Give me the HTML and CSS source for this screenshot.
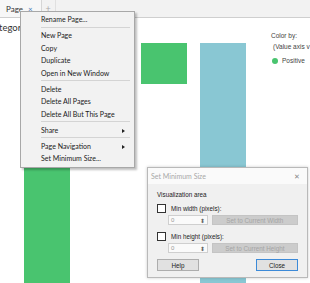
FILE: index.html
```html
<!DOCTYPE html>
<html>
<head>
<meta charset="utf-8">
<link rel="stylesheet" href="styles.css">
</head>
<body>
<div class="app">
  <div class="tabbar">
    <div class="tab"><span class="tab-name">Page</span><span class="tab-x">×</span></div>
    <div class="tab-add">+</div>
  </div>
  <div class="canvas">
    <div class="axis-label">tegor</div>
    <div class="bar bar-green-tall"></div>
    <div class="bar bar-green-short"></div>
    <div class="bar bar-blue"></div>
    <div class="legend">
      <div class="legend-title">Color by:</div>
      <div class="legend-select">(Value axis v</div>
      <div class="legend-item"><span class="dot"></span>Positive</div>
    </div>
  </div>

  <div class="menu">
    <div class="mi">Rename Page...</div>
    <div class="sep"></div>
    <div class="mi">New Page</div>
    <div class="mi">Copy</div>
    <div class="mi">Duplicate</div>
    <div class="mi">Open in New Window</div>
    <div class="sep"></div>
    <div class="mi">Delete</div>
    <div class="mi">Delete All Pages</div>
    <div class="mi">Delete All But This Page</div>
    <div class="sep"></div>
    <div class="mi sub">Share<span class="arrow"></span></div>
    <div class="sep"></div>
    <div class="mi sub">Page Navigation<span class="arrow"></span></div>
    <div class="mi">Set Minimum Size...</div>
  </div>

  <div class="dialog">
    <div class="dlg-title"><span>Set Minimum Size</span><span class="dlg-close">✕</span></div>
    <div class="dlg-body">
      <div class="group-label">Visualization area</div>
      <div class="check-row"><span class="cb"></span><span>Min width (pixels):</span></div>
      <div class="field-row">
        <div class="spin"><span>0</span><span class="spin-arrows">⬍</span></div>
        <div class="btn disabled">Set to Current Width</div>
      </div>
      <div class="check-row"><span class="cb"></span><span>Min height (pixels):</span></div>
      <div class="field-row">
        <div class="spin"><span>0</span><span class="spin-arrows">⬍</span></div>
        <div class="btn disabled">Set to Current Height</div>
      </div>
      <div class="btn-row">
        <div class="btn push">Help</div>
        <div class="btn push default">Close</div>
      </div>
    </div>
  </div>
</div>
</body>
</html>
```

FILE: styles.css
```css
* { box-sizing: border-box; }
html, body { margin: 0; padding: 0; background: #fff; }
body { width: 310px; height: 283px; overflow: hidden; font-family: "Lato", "Noto Sans", sans-serif; color: #222; }
.app { position: relative; width: 310px; height: 283px; }

.tabbar {
  height: 18px;
  background: #f2f2f2;
  border-bottom: 1px solid #cfcfcf;
  display: flex;
  align-items: stretch;
}
.tab {
  display: flex;
  align-items: center;
  gap: 5px;
  padding: 0 8px 0 6px;
  background: #f7f7f7;
  border-right: 1px solid #d6d6d6;
  font-size: 8px;
  color: #333;
}
.tab-x { color: #4a7fb8; font-size: 8px; }
.tab-add { width: 14px; display: flex; align-items: center; justify-content: center; color: #aaa; font-size: 9px; border-right: 1px solid #e0e0e0; }

.canvas { position: relative; height: 265px; }
.axis-label { position: absolute; left: -1px; top: 4px; font-size: 9.5px; color: #333; }
.bar { position: absolute; }
.bar-green-tall { left: 24px; top: 40px; width: 46px; height: 230px; background: #49c46f; }
.bar-green-short { left: 141px; top: 25px; width: 46px; height: 41px; background: #49c46f; }
.bar-blue { left: 200px; top: 25px; width: 46px; height: 250px; background: #89c7d3; }

.legend { position: absolute; left: 271px; top: 14px; font-family: "Liberation Sans", Arial, sans-serif; font-size: 6.5px; color: #444; display: flex; flex-direction: column; gap: 4px; white-space: nowrap; }
.legend-select { margin-left: 2px; }
.legend-item { display: flex; align-items: center; gap: 4px; margin-left: 1px; margin-top: 3px; }
.dot { width: 6px; height: 6px; border-radius: 50%; background: #49c46f; }

.menu {
  position: absolute;
  left: 20px; top: 11px;
  width: 115px;
  background: #f2f2f2;
  border: 1px solid #a8a8a8;
  box-shadow: 2px 2px 2px rgba(0,0,0,0.25);
  padding: 1px 2px 2px;
  font-size: 7px;
  color: #1a1a1a;
}
.mi { height: 12.5px; line-height: 12.5px; padding-left: 18px; position: relative; white-space: nowrap; }
.sep { height: 1px; background: #d4d4d4; margin: 1.25px 2px 1.25px 18px; }
.arrow { position: absolute; right: 7px; top: 5px; width: 0; height: 0; border-left: 3px solid #222; border-top: 2px solid transparent; border-bottom: 2px solid transparent; }

.dialog {
  position: absolute;
  left: 147px; top: 167px;
  width: 161px; height: 111px;
  background: #f0f0f0;
  border: 1px solid #b9b9b9;
  box-shadow: 0 0 3px rgba(0,0,0,0.2);
  font-family: "Liberation Sans", Arial, sans-serif;
  font-size: 6.3px;
  color: #222;
  display: flex; flex-direction: column;
}
.dlg-title { height: 16px; background: #fafafa; display: flex; justify-content: space-between; align-items: center; padding: 0 7px 0 3px; color: #a8a8a8; font-family: "Lato", sans-serif; font-size: 7px; }
.dlg-close { color: #888; font-size: 7px; }
.dlg-body { padding: 6px 9px 0 9px; display: flex; flex-direction: column; }
.group-label { height: 10px; line-height: 10px; margin-bottom: 3px; }
.check-row { display: flex; align-items: center; gap: 5px; height: 10px; margin-bottom: 2px; }
.cb { width: 9px; height: 9px; background: #fff; border: 1px solid #333; }
.field-row { display: flex; gap: 4px; margin-left: 11px; height: 10px; margin-bottom: 6px; }
.spin { width: 40px; height: 10px; background: #fafafa; border: 1px solid #cfcfcf; display: flex; justify-content: space-between; align-items: center; padding: 0 2px; color: #999; font-size: 6px; }
.spin-arrows { font-size: 6px; color: #666; }
.btn { display: flex; align-items: center; justify-content: center; height: 10px; }
.btn.disabled { width: 87px; background: #cccccc; border: 1px solid #c4c4c4; color: #a4a4a4; font-size: 6.3px; }
.btn-row { display: flex; justify-content: space-between; margin-top: 0; }
.btn.push { width: 42px; height: 12px; background: #e1e1e1; border: 1px solid #adadad; }
.btn.default { border: 1px solid #3c8ad8; }
```
